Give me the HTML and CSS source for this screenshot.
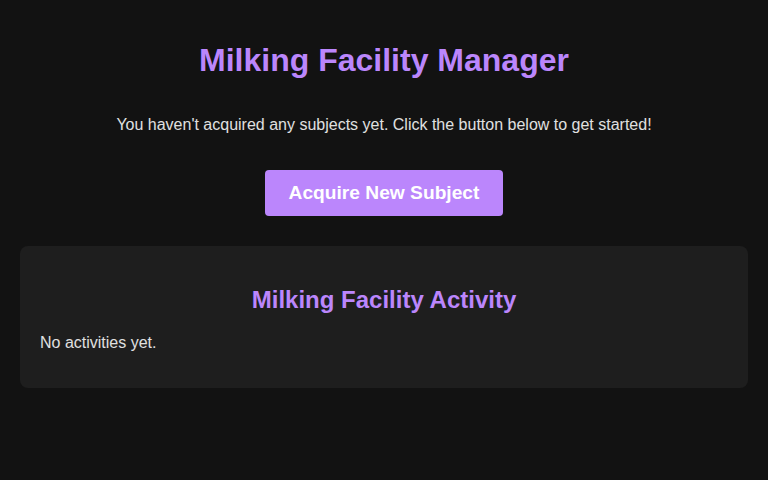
FILE: index.html
```html
<!DOCTYPE html>
<html lang="en">
<head>
<meta charset="utf-8">
<title>Milking Facility Manager</title>
<link rel="stylesheet" href="styles.css">
</head>
<body>
  <main class="app">
    <h1 class="title">Milking Facility Manager</h1>
    <p class="intro">You haven't acquired any subjects yet. Click the button below to get started!</p>
    <div class="actions">
      <button class="btn">Acquire New Subject</button>
    </div>
    <section class="card">
      <h2 class="card-title">Milking Facility Activity</h2>
      <p class="empty">No activities yet.</p>
    </section>
  </main>
</body>
</html>
```

FILE: styles.css
```css
html, body {
  margin: 0;
  background: #121212;
}
body {
  padding: 20px;
  font-family: "Liberation Sans", Arial, sans-serif;
  color: #e0e0e0;
}
.app {
  display: block;
}
.title {
  margin: 22.4px 0 0;
  font-size: 32px;
  font-weight: bold;
  line-height: 37px;
  color: #bb86fc;
  text-align: center;
}
.intro {
  margin: 36.5px 0 0;
  font-size: 16px;
  line-height: 18.4px;
  text-align: center;
}
.actions {
  display: flex;
  justify-content: center;
  margin-top: 35.8px;
}
.btn {
  background: #bb86fc;
  color: #ffffff;
  border: none;
  border-radius: 4px;
  padding: 12px 24px;
  font-family: "Liberation Sans", Arial, sans-serif;
  font-size: 19.2px;
  font-weight: bold;
  line-height: 22px;
  cursor: pointer;
}
.card {
  margin-top: 30px;
  background: #1e1e1e;
  border-radius: 8px;
  padding: 20px;
}
.card-title {
  margin: 19.92px 0;
  font-size: 24px;
  line-height: 27.6px;
  font-weight: bold;
  color: #bb86fc;
  text-align: center;
}
.empty {
  margin: 0 0 16px;
  font-size: 16px;
  line-height: 18.4px;
}
```
